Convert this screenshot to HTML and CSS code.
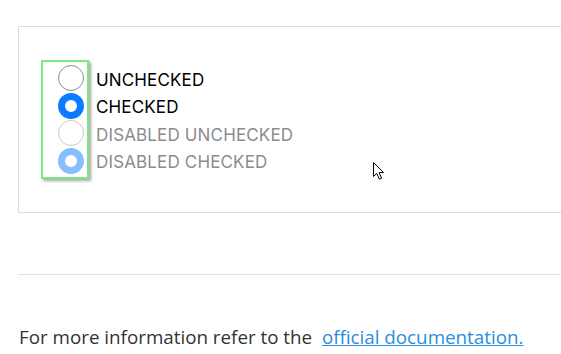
FILE: index.html
```html
<!DOCTYPE html>
<html>
<head>
<meta charset="utf-8">
<link rel="stylesheet" href="styles.css">
</head>
<body>
<div class="page">
  <div class="demo">
    <div class="radio-list">
      <div class="radios">
        <span class="radio"></span>
        <span class="radio checked"></span>
        <span class="radio disabled"></span>
        <span class="radio checked disabled"></span>
      </div>
      <div class="labels">
        <span class="label">UNCHECKED</span>
        <span class="label">CHECKED</span>
        <span class="label muted">DISABLED UNCHECKED</span>
        <span class="label muted">DISABLED CHECKED</span>
      </div>
    </div>
  </div>
  <hr class="divider">
  <p class="info">For more information refer to the&nbsp; <a class="doc-link" href="#">official documentation.</a></p>
</div>
<svg class="cursor" width="14" height="20" viewBox="0 0 14 20"><path d="M1.5 1.5 L1.5 15.5 L4.8 12.4 L7.4 18.2 L9.6 17.2 L7.1 11.6 L11.6 11.6 Z" fill="#fff" stroke="#000" stroke-width="1" stroke-linejoin="miter"/></svg>
</body>
</html>
```
FILE: styles.css
```css
html, body {
  margin: 0;
  padding: 0;
  background: #fff;
  overflow: hidden;
}
body {
  font-family: Inter, "Liberation Sans", sans-serif;
  position: relative;
  width: 561px;
  height: 354px;
}
.page {
  padding: 26px 0 0 18px;
}
.demo {
  border: 1px solid #dcdcdc;
  border-right: 0;
  height: 187px;
  box-sizing: border-box;
  padding: 33px 0 0 22px;
}
.radio-list {
  display: flex;
  align-items: flex-start;
}
.radios {
  display: flex;
  flex-direction: column;
  gap: 1.67px;
  border: 2px solid #7de87d;
  box-shadow: 2px 2px 3px rgba(0, 0, 0, 0.35);
  padding: 3px 3px 3px 15px;
}
.radio {
  display: block;
  width: 26px;
  height: 26px;
  box-sizing: border-box;
  border-radius: 50%;
  border: 1.5px solid #8e8e8e;
  background: #fff;
}
.radio.checked {
  border: 7.5px solid #0a7cff;
}
.radio.disabled {
  border-color: #cacaca;
}
.radio.checked.disabled {
  border-color: #86bfff;
}
.labels {
  display: flex;
  flex-direction: column;
  padding-top: 6.5px;
  margin-left: 7px;
}
.label {
  display: block;
  height: 27.67px;
  line-height: 27.67px;
  font-size: 17px;
  font-weight: 380;
  letter-spacing: 0.15px;
  color: #000;
  white-space: nowrap;
}
.label.muted {
  color: #8c8c8c;
}
.divider {
  border: 0;
  border-top: 1px solid #e2e2e2;
  margin: 61px 0 0 0;
  height: 0;
}
.info {
  margin: 49px 0 0 1px;
  font-family: "Open Sans", sans-serif;
  font-size: 18.8px;
  color: #333;
  white-space: nowrap;
}
.doc-link {
  color: #2b8ce0;
  text-decoration: underline;
}
.cursor {
  position: absolute;
  left: 372px;
  top: 161px;
}
```
